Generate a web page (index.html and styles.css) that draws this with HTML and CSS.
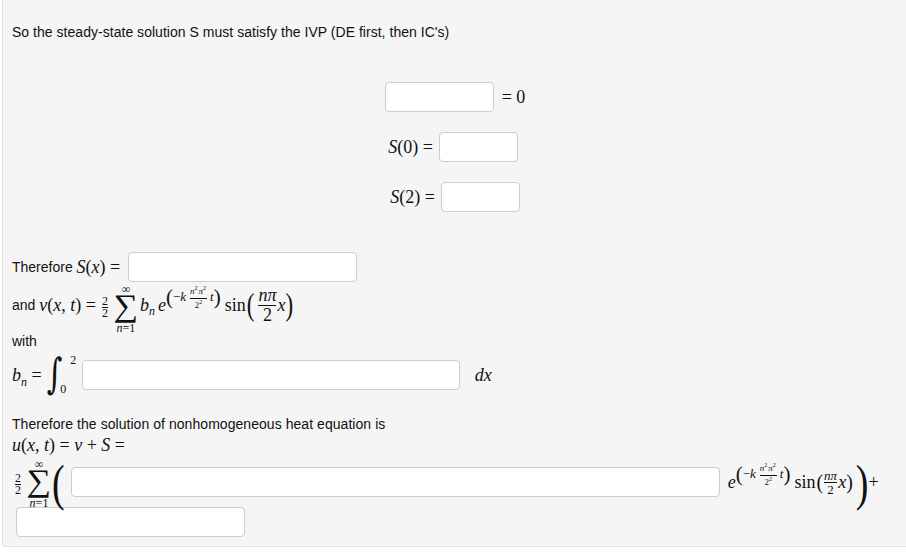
FILE: index.html
```html
<!DOCTYPE html>
<html lang="en">
<head>
    <meta charset="UTF-8">
    <title>Steady-state solution</title>
    <link rel="stylesheet" href="styles.css">
</head>
<body>
    <div class="panel">
        <div class="line intro">So the steady-state solution S must satisfy the IVP (DE first, then IC's)</div>

        <div class="display de"><input class="box w109" type="text"><span class="m after">= 0</span></div>
        <div class="display s0"><span class="m before"><i>S</i>(0) =</span><input class="box w79" type="text"></div>
        <div class="display s2"><span class="m before"><i>S</i>(2) =</span><input class="box w79" type="text"></div>

        <div class="row sx">Therefore&nbsp;<span class="m before"><i>S</i>(<i>x</i>) =</span><input class="box w229" type="text"></div>

        <div class="row vx">
            and&nbsp;<span class="m"><i>v</i>(<i>x</i>, <i>t</i>) =</span>
            <span class="frac small"><span>2</span><span class="den">2</span></span>
            <span class="sum"><span class="lim">∞</span><span class="sigma">∑</span><span class="lim lower-lim"><i>n</i>=1</span></span>
            <span class="m bn-term"><i>b<sub>n</sub></i><i>e</i></span>
            <span class="exp"><span class="paren">(</span>−<i>k</i><span class="frac tiny"><span class="num"><i>n</i><sup>2</sup><i>π</i><sup>2</sup></span><span class="den">2<sup>2</sup></span></span><i>t</i><span class="paren">)</span></span>
            <span class="m sin">sin</span><span class="bigp">(</span>
            <span class="frac big"><span><i>nπ</i></span><span class="den">2</span></span><span class="m"><i>x</i></span><span class="bigp">)</span>
        </div>

        <div class="line with">with</div>

        <div class="row bn">
            <span class="m"><i>b<sub>n</sub></i> =</span>
            <span class="int"><span class="intsign">∫</span><span class="bounds"><span class="upper">2</span><span class="lower">0</span></span></span>
            <input class="box w378" type="text">
            <span class="m dx"><i>dx</i></span>
        </div>

        <div class="line sol">Therefore the solution of nonhomogeneous heat equation is</div>
        <div class="line m ux"><i>u</i>(<i>x</i>, <i>t</i>) = <i>v</i> + <i>S</i> =</div>

        <div class="row series">
            <span class="frac small first"><span>2</span><span class="den">2</span></span>
            <span class="sum"><span class="lim">∞</span><span class="sigma">∑</span><span class="lim lower-lim"><i>n</i>=1</span></span>
            <span class="hugep open">(</span>
            <input class="box w649" type="text">
            <span class="m ee"><i>e</i></span>
            <span class="exp"><span class="paren">(</span>−<i>k</i><span class="frac tiny"><span class="num"><i>n</i><sup>2</sup><i>π</i><sup>2</sup></span><span class="den">2<sup>2</sup></span></span><i>t</i><span class="paren">)</span></span>
            <span class="m sin">sin</span><span class="midp">(</span>
            <span class="frac smallish"><span><i>nπ</i></span><span class="den">2</span></span><span class="m"><i>x</i></span><span class="midp">)</span>
            <span class="hugep close">)</span><span class="m">+</span>
        </div>

        <div class="row last"><input class="box w229" type="text"></div>
    </div>
</body>
</html>
```

FILE: styles.css
```css
html, body {
    margin: 0;
    background: #fff;
}
body {
    font-family: "Liberation Sans", Arial, sans-serif;
    font-size: 14px;
    color: #111;
}
.panel {
    box-sizing: border-box;
    width: 904px;
    height: 547px;
    margin-left: 2px;
    padding: 22px 0 0 9px;
    background: #f5f5f5;
    border-left: 1px solid #e3e3e3;
    border-bottom: 1px solid #e3e3e3;
    border-radius: 0 0 0 4px;
}
.line {
    height: 20px;
    line-height: 20px;
}
.intro {
    letter-spacing: 0.03px;
}
.sol {
    letter-spacing: 0.05px;
}
.row, .display {
    display: flex;
    align-items: center;
}
.display {
    justify-content: center;
    height: 30px;
}
.box {
    box-sizing: border-box;
    height: 30px;
    padding: 0;
    background: #fff;
    border: 1px solid #ccc;
    border-radius: 4px;
    flex: none;
}
.w79 { width: 79px; }
.w109 { width: 109px; }
.w229 { width: 229px; }
.w378 { width: 378px; }
.w649 { width: 649px; }

/* math */
.m, .frac, .sum, .exp, .bounds {
    font-family: "Liberation Serif", "Times New Roman", serif;
}
.m {
    font-size: 18px;
    white-space: pre;
}
sub, sup {
    line-height: 0;
}
sub {
    font-size: 12px;
}
sup {
    font-size: 6px;
}
.before { margin-right: 6px; }
.after { margin-left: 8px; }

.de { margin-top: 40px; padding-right: 8px; }
.s0 { margin-top: 20px; padding-right: 12px; }
.s2 { margin-top: 20px; padding-right: 8px; }
.sx { margin-top: 40px; height: 30px; }
.sx .before { margin-right: 8px; }
.vx { height: 46px; }
.with { margin-top: 3px; }
.bn { margin-top: 9px; height: 30px; }
.sol { margin-top: 24px; }
.ux { margin-top: 1px; }
.series { margin-top: 12px; height: 30px; padding-left: 3px; }
.last { margin-top: 10px; padding-left: 4px; }

.frac {
    display: inline-flex;
    flex-direction: column;
    align-items: center;
    font-size: 18px;
    line-height: 19px;
    margin: 0 1px;
}
.frac .den {
    align-self: stretch;
    text-align: center;
    border-top: 1px solid #111;
}
.frac.big {
    margin-left: 4px;
}
.frac.small {
    font-size: 12px;
    line-height: 11px;
    margin: 4px 7px 0 6px;
}
.frac.small.first {
    margin-left: 0;
}
.frac.smallish {
    font-size: 13px;
    line-height: 13px;
}
.frac.tiny {
    font-size: 9px;
    line-height: 9px;
    margin: 3px 3px 0 4px;
}
.frac.tiny .num {
    padding-bottom: 2px;
}
.frac.tiny .num sup {
    margin-right: 1px;
}
.frac.tiny .den {
    padding-top: 2px;
}
.sum {
    display: inline-flex;
    flex-direction: column;
    align-items: center;
    width: 22px;
    margin-top: 6px;
}
.series .sum {
    margin-top: 3px;
}
.sum .lim {
    font-size: 12px;
    line-height: 10px;
}
.sum .sigma {
    font-size: 30px;
    line-height: 24px;
    transform: scale(1.15, 1.05);
}
.sum .lower-lim {
    margin-top: 5px;
}
.bn-term {
    margin-left: 3px;
}
.bn-term sub {
    margin-right: 3px;
}
.exp {
    display: inline-flex;
    align-items: center;
    font-size: 13px;
    height: 20px;
    margin-bottom: 16px;
}
.paren {
    font-size: 21px;
    line-height: 20px;
}
.sin { margin: 0 1px 0 4px; }
.bigp {
    font-family: "Liberation Serif", serif;
    font-size: 23px;
    line-height: 30px;
    transform: scaleY(1.4);
}
.midp {
    font-family: "Liberation Serif", serif;
    font-size: 20px;
    line-height: 24px;
}
.hugep {
    font-family: "Liberation Serif", serif;
    font-size: 38px;
    line-height: 40px;
    flex: none;
    transform: scaleY(1.35);
}
.hugep.open { margin: 0 6px 0 2px; }
.hugep.close { margin-left: 3px; }
.int {
    display: inline-flex;
    align-items: stretch;
    height: 42px;
    width: 35px;
    margin-left: 5px;
}
.intsign {
    font-family: "DejaVu Serif", "Liberation Serif", serif;
    font-size: 30px;
    line-height: 40px;
    transform: scaleY(1.4);
}
.bounds {
    display: flex;
    flex-direction: column;
    justify-content: space-between;
    font-size: 12px;
    line-height: 12px;
}
.upper { margin-left: 8px; }
.lower { margin-left: -2px; margin-bottom: 1px; }
.dx { margin-left: 15px; }
.ee { margin-left: 8px; }
```
